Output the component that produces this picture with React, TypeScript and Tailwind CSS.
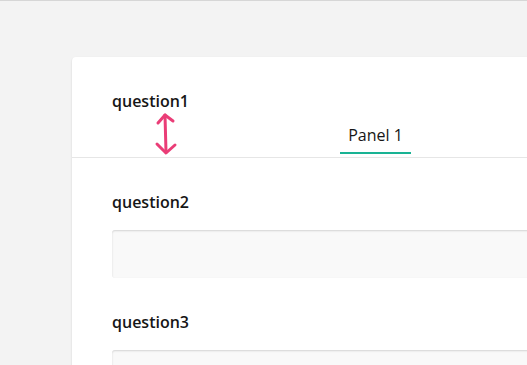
import React from "react";

const font = { fontFamily: '"Open Sans", "Liberation Sans", sans-serif' };

function Question({ title }: { title: string }) {
  return (
    <div className="flex flex-col">
      <p className="text-[16px] leading-6 font-semibold text-[#161616]">{title}</p>
      <div className="mt-4 h-12 w-[600px] rounded-[3px] bg-[#f9f9f9] shadow-[inset_0_1px_2px_rgba(0,0,0,0.15)]" />
    </div>
  );
}

export default function App() {
  return (
    <div
      className="relative h-[365px] w-[527px] overflow-hidden border-t border-[#d6d6d6] bg-[#f3f3f3]"
      style={font}
    >
      <div className="ml-[72px] mt-14 w-[620px] rounded-[4px] bg-white shadow-[0_1px_2px_rgba(0,0,0,0.15)]">
        <div className="border-b border-[#e6e6e6] px-10 pt-8 pb-[3px]">
          <p className="text-[16px] leading-6 font-semibold text-[#161616]">question1</p>
          <div className="mt-[10px] flex pl-[228px]">
            <div className="w-[71px] border-b-2 border-[#19b394] pb-[5px] text-center text-[16px] leading-6 text-[#161616]">
              Panel 1
            </div>
          </div>
        </div>
        <div className="flex flex-col gap-8 px-10 pt-[32px] pb-10">
          <Question title="question2" />
          <Question title="question3" />
        </div>
      </div>

      <svg
        className="absolute left-[150px] top-[110px]"
        width="32"
        height="48"
        viewBox="0 0 32 48"
        fill="none"
        stroke="#ea3d77"
        strokeWidth="3"
        strokeLinecap="round"
        strokeLinejoin="round"
      >
        <path d="M15 4 L16 41" />
        <path d="M8 12 L15 4 L23 10" />
        <path d="M7 33 L16 42 L25 34" />
      </svg>
    </div>
  );
}
